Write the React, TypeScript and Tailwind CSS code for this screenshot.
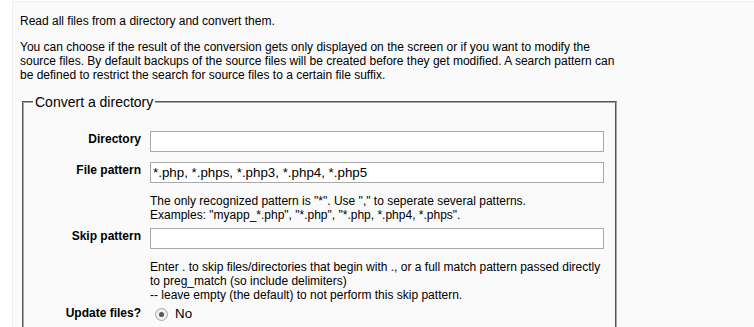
import React from "react";

const font = { fontFamily: '"Liberation Sans", Arial, sans-serif' };

function Label({ children }: { children: React.ReactNode }) {
  return (
    <div className="text-right font-bold text-[12px] leading-[14px] pt-[1px]">
      {children}
    </div>
  );
}

function TextInput({ value = "" }: { value?: string }) {
  return (
    <input
      type="text"
      defaultValue={value}
      className="block w-[454px] h-[21px] border border-[#a9a9a9] bg-white px-[2px] text-[13.33px] text-black outline-none"
      style={font}
    />
  );
}

function Help({ children }: { children: React.ReactNode }) {
  return <div className="text-[12px] leading-[14px] w-[454px]">{children}</div>;
}

export default function App() {
  return (
    <div className="min-h-screen bg-white text-black overflow-hidden" style={font}>
      <div className="ml-[12px] mt-[1px] border-l border-t border-[#eeeeee] bg-[#fafafa] min-h-[326px] pl-[7px] pt-[12px]">
        <div className="w-[596px] text-[12px] leading-[14px]">
          <p>Read all files from a directory and convert them.</p>
          <p className="mt-[12px]">
            You can choose if the result of the conversion gets only displayed on the screen or if
            you want to modify the source files. By default backups of the source files will be
            created before they get modified. A search pattern can be defined to restrict the
            search for source files to a certain file suffix.
          </p>

          <fieldset className="mt-[12px] ml-[2px] w-[595px] border-2 border-[#a8a8a8] [border-style:groove] px-[9px] pt-[4px] pb-[8px]">
            <legend className="px-[2px] text-[14px] leading-[16px]">Convert a directory</legend>

            <div className="grid grid-cols-[108px_1fr] gap-x-[9px] mt-[17px]">
              <Label>Directory</Label>
              <TextInput />

              <div className="h-[10px] col-span-2" />

              <Label>File pattern</Label>
              <TextInput value="*.php, *.phps, *.php3, *.php4, *.php5" />

              <div className="h-[11px] col-span-2" />

              <div />
              <Help>
                The only recognized pattern is "*". Use "," to seperate several patterns.
                <br />
                Examples: "myapp_*.php", "*.php", "*.php, *.php4, *.phps".
              </Help>

              <div className="h-[6px] col-span-2" />

              <Label>Skip pattern</Label>
              <TextInput />

              <div className="h-[11px] col-span-2" />

              <div />
              <Help>
                Enter . to skip files/directories that begin with ., or a full match pattern passed
                directly to preg_match (so include delimiters)
                <br />
                -- leave empty (the default) to not perform this skip pattern.
              </Help>

              <div className="h-[3px] col-span-2" />

              <Label>Update files?</Label>
              <div className="flex items-center pl-[5px] pt-[1px]">
                <span className="relative inline-flex w-[13px] h-[13px] rounded-full border border-[#a8a8a8] bg-[#eeeeee] items-center justify-center">
                  <span className="w-[5px] h-[5px] rounded-full bg-[#555555]" />
                </span>
                <span className="ml-[7px] text-[13.33px] leading-[16px]">No</span>
              </div>
            </div>
          </fieldset>
        </div>
      </div>
    </div>
  );
}
